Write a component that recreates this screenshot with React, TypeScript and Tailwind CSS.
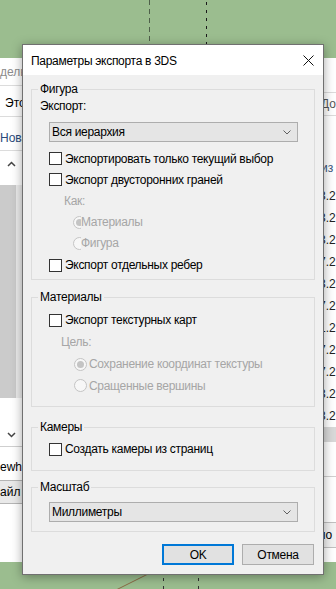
import React from "react";

const Checkbox = () => (
  <span className="w-[13px] h-[13px] border border-[#333333] bg-white shrink-0" />
);

const Radio = ({ checked, clip }: { checked?: boolean; clip?: boolean }) => (
  <span className={clip ? "w-[8px] h-[13px] overflow-hidden shrink-0" : "w-[13px] h-[13px] shrink-0"}>
    <span className="w-[13px] h-[13px] rounded-full border border-[#c4c4c4] bg-[#f7f7f7] flex items-center justify-center">
      {checked && <span className="w-[7px] h-[7px] rounded-full bg-[#c4c4c4]" />}
    </span>
  </span>
);

const Chevron = () => (
  <svg width="8" height="5" viewBox="0 0 8 5" className="shrink-0">
    <path d="M0.5 0.5 L4 4 L7.5 0.5" fill="none" stroke="#606060" strokeWidth="1" />
  </svg>
);

const Select = ({ label }: { label: string }) => (
  <div className="ml-[17px] w-[249px] h-[20px] border border-[#adadad] bg-[#e5e5e5] flex items-center justify-between pl-[2px] pr-[6px]">
    <span className="leading-[16px]">{label}</span>
    <Chevron />
  </div>
);

const Legend = ({ children }: { children: React.ReactNode }) => (
  <legend className="ml-[6px] px-[2px] leading-[16px] h-[16px]">{children}</legend>
);

export default function App() {
  const nums = ["3.2", "3.2", "3.2", "7.2", "3.2", "7.2", "1.2", "7.2", "7.2", "3.2", "3.2"];
  return (
    <div className="relative w-[336px] h-[589px] overflow-hidden bg-[#9bbd8f] text-[12px] text-black font-['Liberation_Sans','Noto_Sans',sans-serif]">
      <div className="flex flex-col h-full">
        {/* top canvas */}
        <div className="h-[58px] shrink-0">
          <svg width="336" height="58" viewBox="0 0 336 58">
            <line x1="149.5" y1="0" x2="149.5" y2="58" stroke="#4e5f4a" strokeWidth="1" strokeDasharray="5 4" />
            <line x1="206.5" y1="2" x2="206.5" y2="58" stroke="#1a1a1a" strokeWidth="1" strokeDasharray="3 5" />
          </svg>
        </div>
        {/* middle row */}
        <div className="h-[504px] shrink-0 flex">
          {/* left panel */}
          <div className="w-[40px] bg-white flex flex-col overflow-hidden whitespace-nowrap">
            <div className="h-[27px] flex items-center text-[#8c8c8c] leading-[16px]">дель</div>
            <div className="h-px bg-[#dcdcdc]" />
            <div className="h-[30px] pt-[9px] pl-[5px] leading-[16px]">Это</div>
            <div className="h-px bg-[#dcdcdc]" />
            <div className="h-[33px] pt-[13px] leading-[16px] text-[#2a4a7a]">Нова</div>
            <div className="h-px bg-[#dcdcdc]" />
            <div className="h-[34px] pl-[7px] pt-[10px]">
              <svg width="9" height="6" viewBox="0 0 9 6">
                <path d="M1 5 L4.5 1.5 L8 5" fill="none" stroke="#444" strokeWidth="1.5" />
              </svg>
            </div>
            <div className="h-[213px] flex">
              <div className="w-[16px] bg-[#cbcbcb]" />
              <div className="w-[6px] bg-[#ebebeb]" />
            </div>
            <div className="h-[48px] pl-[7px] pt-[34px]">
              <svg width="9" height="6" viewBox="0 0 9 6">
                <path d="M1 1 L4.5 4.5 L8 1" fill="none" stroke="#444" strokeWidth="1.5" />
              </svg>
            </div>
            <div className="h-px bg-[#cfcfcf]" />
            <div className="h-[33px] pt-[12px] leading-[16px]">ewh</div>
            <div className="h-px bg-[#b5b5b5]" />
            <div className="h-[22px] bg-[#e9e9e9] flex items-center leading-[16px]">айл</div>
            <div className="h-px bg-[#b5b5b5]" />
            <div className="flex-1 bg-white" />
          </div>
          <div className="flex-1" />
          {/* right panel */}
          <div className="w-[20px] bg-white flex flex-col overflow-hidden whitespace-nowrap">
            <div className="h-[34px]" />
            <div className="h-px bg-[#dcdcdc]" />
            <div className="h-[22px] flex items-center pl-[5px] text-[#555] leading-[16px]">До</div>
            <div className="h-px bg-[#dcdcdc]" />
            <div className="h-[42px]" />
            <div className="h-[20px] flex items-center pl-[5px] text-[#3a5a80] leading-[16px]">из</div>
            <div className="h-[7px]" />
            {nums.map((n, i) => (
              <div key={i} className="h-[22px] flex items-center pl-[3px] leading-[16px] text-[#222]">{n}</div>
            ))}
            <div className="h-[15px] bg-[#d9d9d9]" />
            <div className="h-[34px]" />
            <div className="h-px bg-[#d0d0d0]" />
            <div className="h-[45px]" />
            <div className="h-px bg-[#c0c0c0]" />
            <div className="h-[24px] flex items-center pl-[3px] leading-[16px] bg-[#f2f2f2]">по</div>
            <div className="h-px bg-[#c0c0c0]" />
            <div className="flex-1" />
          </div>
        </div>
        {/* bottom canvas */}
        <div className="flex-1">
          <svg width="336" height="27" viewBox="0 0 336 27">
            <line x1="163.5" y1="0" x2="163.5" y2="27" stroke="#333" strokeWidth="1" strokeDasharray="3 5" />
            <line x1="198.5" y1="0" x2="198.5" y2="27" stroke="#333" strokeWidth="1" strokeDasharray="3 5" />
            <line x1="116" y1="28" x2="152" y2="10" stroke="#8a6a45" strokeWidth="1" />
          </svg>
        </div>
      </div>

      {/* Dialog */}
      <div className="absolute left-[22px] top-[44px] w-[302px] h-[531px] border border-[#707070] bg-[#f0f0f0] flex flex-col tracking-[-0.3px] shadow-[0_2px_10px_rgba(0,0,0,0.35)]">
        <div className="h-[30px] shrink-0 bg-white flex items-center justify-between pl-[8px] pr-[9px]">
          <span className="leading-[16px] pt-[2px]">Параметры экспорта в 3DS</span>
          <svg width="11" height="11" viewBox="0 0 11 11">
            <path d="M0.5 0.5 L10.5 10.5 M10.5 0.5 L0.5 10.5" stroke="#111" strokeWidth="1" />
          </svg>
        </div>
        <div className="flex flex-col pl-[8px]">
          {/* Фигура */}
          <fieldset className="mt-[6px] w-[284px] border border-[#dcdcdc] pb-[3px]">
            <Legend>Фигура</Legend>
            <div className="mt-[1px] h-[16px] leading-[16px] pl-[8px]">Экспорт:</div>
            <div className="mt-[8px]">
              <Select label="Вся иерархия" />
            </div>
            <div className="mt-[6px] flex flex-col">
              <div className="h-[21px] flex items-center pl-[17px] gap-[3px]">
                <Checkbox />
                <span className="leading-[16px]">Экспортировать только текущий выбор</span>
              </div>
              <div className="h-[21px] flex items-center pl-[17px] gap-[3px]">
                <Checkbox />
                <span className="leading-[16px]">Экспорт двусторонних граней</span>
              </div>
              <div className="h-[22px] flex items-center pl-[32px] text-[#a6a6a6] leading-[16px]">Как:</div>
              <div className="h-[20px] flex items-center pl-[41px] text-[#a6a6a6]">
                <Radio checked clip />
                <span className="leading-[16px]">Материалы</span>
              </div>
              <div className="h-[22px] flex items-center pl-[41px] text-[#a6a6a6]">
                <Radio clip />
                <span className="leading-[16px]">Фигура</span>
              </div>
              <div className="h-[22px] flex items-center pl-[17px] gap-[3px]">
                <Checkbox />
                <span className="leading-[16px]">Экспорт отдельных ребер</span>
              </div>
            </div>
          </fieldset>

          {/* Материалы */}
          <fieldset className="mt-[9px] w-[284px] border border-[#dcdcdc] pb-[10px]">
            <Legend>Материалы</Legend>
            <div className="mt-[4px] flex flex-col">
              <div className="h-[22px] flex items-center pl-[17px] gap-[3px]">
                <Checkbox />
                <span className="leading-[16px]">Экспорт текстурных карт</span>
              </div>
              <div className="h-[22px] flex items-center pl-[29px] text-[#a6a6a6] leading-[16px]">Цель:</div>
              <div className="h-[22px] flex items-center pl-[42px] gap-[2px] text-[#a6a6a6]">
                <Radio checked />
                <span className="leading-[16px]">Сохранение координат текстуры</span>
              </div>
              <div className="h-[21px] flex items-center pl-[42px] gap-[2px] text-[#a6a6a6]">
                <Radio />
                <span className="leading-[16px]">Сращенные вершины</span>
              </div>
            </div>
          </fieldset>

          {/* Камеры */}
          <fieldset className="mt-[12px] w-[284px] border border-[#dcdcdc] pb-[11px]">
            <Legend>Камеры</Legend>
            <div className="mt-[4px] h-[20px] flex items-center pl-[17px] gap-[3px]">
              <Checkbox />
              <span className="leading-[16px]">Создать камеры из страниц</span>
            </div>
          </fieldset>

          {/* Масштаб */}
          <fieldset className="mt-[8px] w-[284px] border border-[#dcdcdc] pb-[9px]">
            <Legend>Масштаб</Legend>
            <div className="mt-[7px]">
              <Select label="Миллиметры" />
            </div>
          </fieldset>

          {/* Buttons */}
          <div className="mt-[12px] w-[284px] flex justify-end gap-[8px] pr-[1px]">
            <button className="w-[72px] h-[21px] border-2 border-[#0078d7] bg-[#e1e1e1] flex items-center justify-center leading-[16px]">OK</button>
            <button className="w-[72px] h-[21px] border border-[#adadad] bg-[#e1e1e1] flex items-center justify-center leading-[16px]">Отмена</button>
          </div>
        </div>
      </div>
    </div>
  );
}
